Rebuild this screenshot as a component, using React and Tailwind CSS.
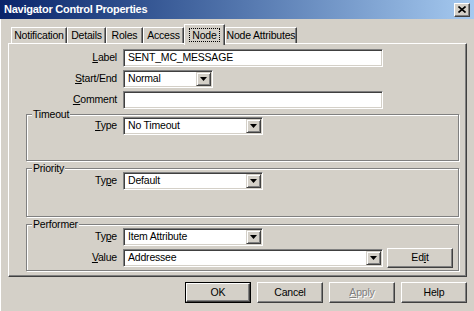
import React from "react";

const raised =
  "border border-t-white border-l-white border-b-[#404040] border-r-[#404040] shadow-[inset_-1px_-1px_0_#808080]";
const sunken =
  "border border-t-[#808080] border-l-[#808080] border-b-white border-r-white shadow-[inset_1px_1px_0_#404040,inset_-1px_-1px_0_#d4d0c8]";

const Arrow = () => (
  <svg width="7" height="4" viewBox="0 0 7 4">
    <path d="M0 0h7L3.5 4z" fill="#000" />
  </svg>
);

const Field = ({ w, value, select }) => (
  <div className={`h-[18px] ${w} bg-white p-[1px] flex items-stretch ${sunken}`}>
    <div className="flex-1 pl-[3px] flex items-center whitespace-nowrap overflow-hidden">{value}</div>
    {select && (
      <div className="w-[15px] bg-[#d4d0c8] flex items-center justify-center border border-t-[#d4d0c8] border-l-[#d4d0c8] border-b-[#404040] border-r-[#404040] shadow-[inset_1px_1px_0_white,inset_-1px_-1px_0_#808080]">
        <Arrow />
      </div>
    )}
  </div>
);

const Row = ({ label, lw, children, className = "" }) => (
  <div className={`flex items-center ${className}`}>
    <div className={`${lw} text-right pr-[6px] whitespace-nowrap`}>{label}</div>
    {children}
  </div>
);

const Group = ({ title, h, pt, children }) => (
  <div
    className={`relative ml-[17px] mr-[7px] ${h} ${pt} border border-[#808080] shadow-[inset_1px_1px_0_white,1px_1px_0_white]`}
  >
    <span className="absolute -top-[7px] left-[5px] bg-[#d4d0c8] px-[1px] leading-[12px]">{title}</span>
    {children}
  </div>
);

const Button = ({ children, def, disabled }) => {
  const inner = (
    <div className={`h-full w-full flex items-center justify-center ${raised}`}>
      {disabled ? (
        <span className="text-[#808080] [text-shadow:1px_1px_0_white]">{children}</span>
      ) : (
        children
      )}
    </div>
  );
  return def ? (
    <div className="w-[66px] h-[21px] border border-black">{inner}</div>
  ) : (
    <div className="w-[66px] h-[21px]">{inner}</div>
  );
};

const tabs = [
  { t: "Notification", w: "w-[56px]" },
  { t: "Details", w: "w-[39px]" },
  { t: "Roles", w: "w-[37px]" },
  { t: "Access", w: "w-[41px]" },
  { t: "Node", w: "w-[41px]", active: true },
  { t: "Node Attributes", w: "w-[72px]" },
];

export default function App() {
  return (
    <div className="w-[474px] h-[311px] bg-[#d4d0c8] overflow-hidden text-black text-[10.5px] tracking-[-0.2px] font-['Liberation_Sans',Arial,sans-serif] shadow-[inset_1px_0_0_white]">
      {/* title bar */}
      <div className="h-[19px] flex items-center justify-between pl-[4px] pr-[4px] bg-gradient-to-r from-[#0a246a] to-[#a6caf0]">
        <span className="text-white font-bold text-[11px] tracking-[-0.25px]">Navigator Control Properties</span>
        <div className={`w-[16px] h-[14px] bg-[#d4d0c8] flex items-center justify-center ${raised}`}>
          <svg width="8" height="7" viewBox="0 0 8 7">
            <path d="M0.5 0.5L7.5 6.5M7.5 0.5L0.5 6.5" stroke="#000" strokeWidth="1.6" />
          </svg>
        </div>
      </div>

      <div className="pl-[8px] pr-[7px] pt-[5px]">
        {/* tabs */}
        <div className="flex items-end h-[19px] pl-[3px]">
          {tabs.map((tab) =>
            tab.active ? (
              <div
                key={tab.t}
                className={`${tab.w} h-[21px] -mb-[2px] relative z-10 bg-[#d4d0c8] flex items-start justify-center pt-[3px] border-l border-t border-r border-l-white border-t-white border-r-[#404040] shadow-[inset_-1px_0_0_#808080]`}
              >
                <span className="border border-dotted border-black px-[2px] leading-[12px]">{tab.t}</span>
              </div>
            ) : (
              <div
                key={tab.t}
                className={`${tab.w} h-[16px] flex items-center justify-center border-l border-t border-r border-l-white border-t-white border-r-[#404040] shadow-[inset_-1px_0_0_#808080]`}
              >
                {tab.t}
              </div>
            )
          )}
        </div>

        {/* panel */}
        <div className={`h-[234px] pt-[5px] ${raised}`}>
          <Row lw="w-[114px]" label={<><u>L</u>abel</>}>
            <Field w="w-[260px]" value="SENT_MC_MESSAGE" />
          </Row>
          <Row lw="w-[114px]" className="mt-[3px]" label={<><u>S</u>tart/End</>}>
            <Field w="w-[90px]" value="Normal" select />
          </Row>
          <Row lw="w-[114px]" className="mt-[3px]" label={<><u>C</u>omment</>}>
            <Field w="w-[260px]" value="" />
          </Row>

          <div className="mt-[5px]">
            <Group title="Timeout" h="h-[47px]" pt="pt-[2px]">
              <Row lw="w-[96px]" label={<><u>T</u>ype</>}>
                <Field w="w-[140px]" value="No Timeout" select />
              </Row>
            </Group>
          </div>

          <div className="mt-[7px]">
            <Group title="Priority" h="h-[49px]" pt="pt-[3px]">
              <Row lw="w-[96px]" label={<>Ty<u>p</u>e</>}>
                <Field w="w-[140px]" value="Default" select />
              </Row>
            </Group>
          </div>

          <div className="mt-[7px]">
            <Group title="Performer" h="h-[47px]" pt="pt-[3px]">
              <Row lw="w-[96px]" label={<>Ty<u>p</u>e</>}>
                <Field w="w-[140px]" value="Item Attribute" select />
              </Row>
              <Row lw="w-[96px]" className="mt-[2px]" label={<><u>V</u>alue</>}>
                <Field w="w-[260px]" value="Addressee" select />
                <div className="ml-[4px]">
                  <div className={`w-[66px] h-[20px] flex items-center justify-center ${raised}`}>
                    Ed<u>i</u>t
                  </div>
                </div>
              </Row>
            </Group>
          </div>
        </div>

        {/* buttons */}
        <div className="flex justify-end gap-[6px] mt-[5px]">
          <Button def>OK</Button>
          <Button>Cancel</Button>
          <Button disabled>
            <u>A</u>pply
          </Button>
          <Button>Help</Button>
        </div>
      </div>
    </div>
  );
}
